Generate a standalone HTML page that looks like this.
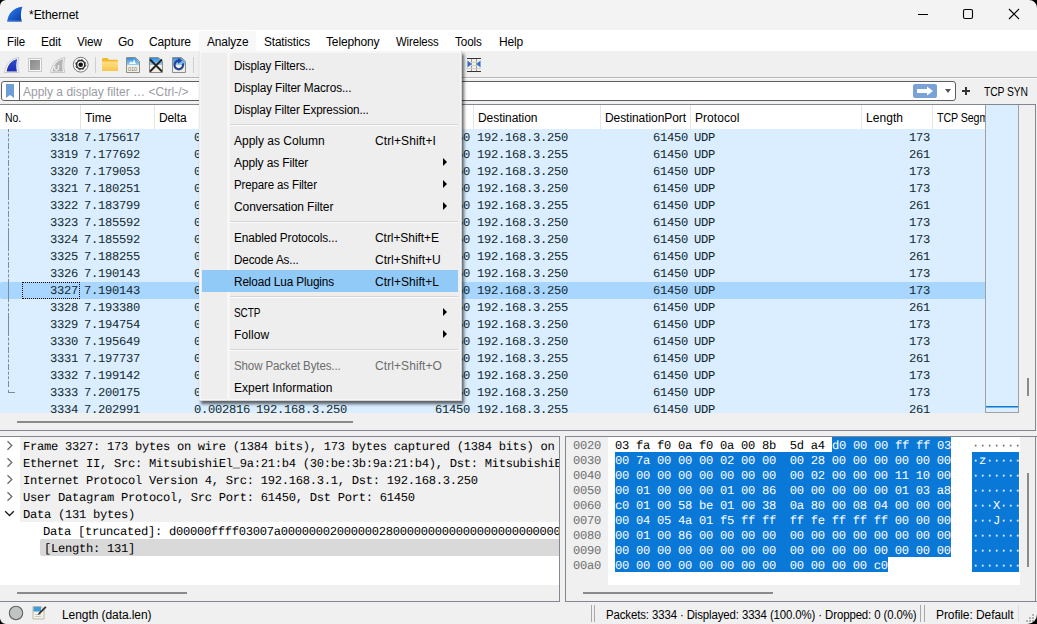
<!DOCTYPE html><html><head><meta charset="utf-8"><title>Ethernet</title><style>
*{box-sizing:border-box;margin:0;padding:0}
html,body{width:1037px;height:624px;overflow:hidden;background:#f0f0f0}
body{position:relative;font-family:"Liberation Sans",sans-serif;font-size:12px;color:#000}
.a{position:absolute}
.t{position:absolute;white-space:pre;line-height:14px;height:14px;font-size:12px}
.m{position:absolute;white-space:pre;font-family:"Liberation Mono",monospace;font-size:12.15px;letter-spacing:-0.291px;line-height:14px;height:14px;color:#12272e;text-rendering:geometricPrecision}
.mr{text-align:right}
.row{position:absolute;left:0;width:985px;height:17px}
.sel{background:#a9d6ff;border-radius:2px 0 0 2px}
.mi{position:absolute;left:202px;width:256px;height:22px}
.sep{position:absolute;left:230px;width:228px;height:1px;background:#d7d7d7}
.arr{position:absolute;left:443px;width:0;height:0;border-left:4px solid #000;border-top:4px solid transparent;border-bottom:4px solid transparent}
.hx{color:#000}
.hs{color:#fff}
</style></head><body>
<div class="a" style="left:0px;top:0px;width:1037px;height:30px;background:#f3f3f3;"></div>
<div class="t" style="left:29px;top:8px;letter-spacing:-0.041px;">*Ethernet</div>
<svg class="a" style="left:0;top:0" width="30" height="30" viewBox="0 0 30 30"><defs><linearGradient id="fg" x1="0" y1="0" x2="1" y2="1"><stop offset="0" stop-color="#2f86f0"/><stop offset="1" stop-color="#0636a6"/></linearGradient></defs><path d="M7.200 21.800C8 13.500 13.500 7.800 22.400 6.800C20.800 11 20.300 16.500 21.800 21.800Z" fill="url(#fg)"/><path d="M7.400 21.200h14.300" stroke="#6f9ae0" stroke-width="1.200" opacity=".8"/></svg>
<svg class="a" style="left:900px;top:0" width="137" height="30" viewBox="0 0 137 30"><path d="M18 14.5h10" stroke="#000" stroke-width="1" fill="none"/><rect x="63.5" y="9.5" width="9" height="9" rx="1.5" fill="none" stroke="#000" stroke-width="1.100"/><path d="M109 9l10 10M119 9l-10 10" stroke="#000" stroke-width="1.150" fill="none"/></svg>
<div class="a" style="left:0px;top:30px;width:1037px;height:21px;background:#fff;"></div>
<div class="a" style="left:0px;top:51px;width:1037px;height:1px;background:#f0f0f0;"></div>
<div class="a" style="left:199px;top:31px;width:57px;height:20px;background:#f8f8f8;border-radius:3px 3px 0 0"></div>
<div class="t" style="left:7px;top:35px;letter-spacing:-0.12px;transform:scaleX(0.9565);transform-origin:0 0;">File</div>
<div class="t" style="left:41px;top:35px;letter-spacing:-0.12px;transform:scaleX(0.9868);transform-origin:0 0;">Edit</div>
<div class="t" style="left:77px;top:35px;letter-spacing:-0.12px;transform:scaleX(0.9812);transform-origin:0 0;">View</div>
<div class="t" style="left:118px;top:35px;letter-spacing:-0.210px;">Go</div>
<div class="t" style="left:149px;top:35px;letter-spacing:-0.124px;">Capture</div>
<div class="t" style="left:207px;top:35px;letter-spacing:-0.12px;transform:scaleX(0.9899);transform-origin:0 0;">Analyze</div>
<div class="t" style="left:264px;top:35px;letter-spacing:-0.12px;transform:scaleX(0.9813);transform-origin:0 0;">Statistics</div>
<div class="t" style="left:326px;top:35px;letter-spacing:-0.143px;">Telephony</div>
<div class="t" style="left:396px;top:35px;letter-spacing:-0.12px;transform:scaleX(0.9465);transform-origin:0 0;">Wireless</div>
<div class="t" style="left:455px;top:35px;letter-spacing:-0.12px;transform:scaleX(0.9754);transform-origin:0 0;">Tools</div>
<div class="t" style="left:499px;top:35px;letter-spacing:-0.139px;">Help</div>
<div class="a" style="left:0px;top:52px;width:1037px;height:25px;background:#f0f0f0;"></div>
<div class="a" style="left:0px;top:77px;width:1037px;height:1px;background:#b4b4b4;"></div>
<div class="a" style="left:0px;top:78px;width:1037px;height:1px;background:#fbfbfb;"></div>
<svg class="a" style="left:0;top:52px" width="500" height="26" viewBox="0 0 500 26"><defs><linearGradient id="ib" x1="0" y1="0" x2="0" y2="1"><stop offset="0" stop-color="#2f4fd0"/><stop offset="1" stop-color="#1c2fb0"/></linearGradient><linearGradient id="ig" x1="0" y1="0" x2="1" y2="1"><stop offset="0" stop-color="#8a8a8a"/><stop offset="1" stop-color="#a8a8a8"/></linearGradient><linearGradient id="fo" x1="0" y1="0" x2="0" y2="1"><stop offset="0" stop-color="#ffe08a"/><stop offset="1" stop-color="#f7c64a"/></linearGradient><linearGradient id="sk" x1="0" y1="0" x2="0" y2="1"><stop offset="0" stop-color="#2f8fe0"/><stop offset="1" stop-color="#9ccdf2"/></linearGradient></defs><path d="M4.500 20.500C5.500 12.500 10.500 6.500 19 5.500C17.500 10 17.300 15 18.800 20.500Z" fill="#fdfdfd" stroke="#c9c9c9" stroke-width="1"/><path d="M6.600 19.500C7.500 13 11.500 8.300 17.300 7C16 11 16 15.500 17 19.500Z" fill="url(#ib)"/><rect x="28.500" y="6.500" width="13" height="13" fill="#f8f8f8" stroke="#c8c8c8"/><rect x="30" y="8" width="10" height="10" fill="url(#ig)"/><path d="M50.500 20.500C51.500 12.500 56.500 6.500 65 5.500C63.500 10 63.300 15 64.800 20.500Z" fill="#f4f4f4" stroke="#c9c9c9" stroke-width="1"/><path d="M52.600 19.500C53.500 13 57.500 8.300 63.300 7C62 11 62 15.500 63 19.500Z" fill="#b4b4b4"/><path d="M58.500 13v3a2 2 0 1 1-3-1.700" fill="none" stroke="#ececec" stroke-width="1.400"/><circle cx="80.700" cy="12.700" r="7.400" fill="#fdfdfd" stroke="#555" stroke-width="0.800"/><circle cx="80.700" cy="12.700" r="4.100" fill="none" stroke="#2c2c2c" stroke-width="1.500"/><circle cx="80.700" cy="12.700" r="5.100" fill="none" stroke="#2c2c2c" stroke-width="0.900" stroke-dasharray="2.003 2.003"/><circle cx="80.700" cy="12.700" r="2.300" fill="#111"/><rect x="95" y="5" width="1" height="16" fill="#cfcfcf"/><path d="M102 7.500c0-1 .500-1.500 1.500-1.500h4l1.500 1.700h7.500c1 0 1.500.500 1.500 1.500v8.300c0 1-.500 1.500-1.500 1.500h-13c-1 0-1.500-.500-1.500-1.500z" fill="#f4b92b"/><path d="M102 9.500h16v8c0 1-.500 1.500-1.500 1.500h-13c-1 0-1.500-.500-1.500-1.500z" fill="url(#fo)"/><path d="M126.500 5.500h9l4 4v11h-13z" fill="#f1efe2" stroke="#8e8e86"/><path d="M127 6h8.300l3.700 3.700v3.300h-12z" fill="url(#sk)"/><path d="M129 12l2-3 1.500 2 1.500-4 2 5z" fill="#fff" opacity=".9"/><text x="128" y="18.500" font-family="Liberation Sans" font-size="5.500" fill="#777">010</text><path d="M149.500 5.500h9l4 4v11h-13z" fill="#f1efe2" stroke="#8e8e86"/><path d="M150 6h8.300l3.700 3.700v3.300h-12z" fill="url(#sk)"/><path d="M150 7.500l12 12M162 7.500l-12 12" stroke="#222" stroke-width="1.900"/><path d="M172.500 5.500h9l4 4v11h-13z" fill="#f1efe2" stroke="#8e8e86"/><path d="M173 6h8.300l3.700 3.700v3.300h-12z" fill="url(#sk)"/><path d="M182.800 11.500a4.300 4.300 0 1 1-3.800-2.800" fill="none" stroke="#24409a" stroke-width="2.200"/><path d="M178 5.800l4 3-4 3z" fill="#24409a"/><rect x="193" y="5" width="1" height="16" fill="#cfcfcf"/><path d="M467 6.500h14M467 19.500h14" stroke="#333" stroke-width="1.200"/><path d="M471.500 7v12M476.500 7v12" stroke="#9a9a90" stroke-width="1"/><path d="M467 10.500h14M467 13.500h14M467 16.500h14" stroke="#d2d2c8" stroke-width="1"/><path d="M467.500 8.500l4 3.500-4 3.500z" fill="#2f6fc0"/><path d="M480.500 8.500l-4 3.500 4 3.500z" fill="#2f6fc0"/></svg>
<div class="a" style="left:1px;top:81px;width:955px;height:20px;background:#fff;border:1px solid #5f5f5f;border-radius:3px"></div>
<div class="a" style="left:19px;top:82px;width:1px;height:18px;background:#5f5f5f;"></div>
<svg class="a" style="left:5px;top:84px" width="10" height="14" viewBox="0 0 10 14"><path d="M1 0h8v14l-4-3-4 3z" fill="#6d9fd6"/></svg>
<div class="t" style="left:23px;top:85px;letter-spacing:0.003px;color:#9b9ba3">Apply a display filter … &lt;Ctrl-/&gt;</div>
<div class="a" style="left:913px;top:84px;width:24px;height:14px;background:#78a2d8;border-radius:2px"></div>
<svg class="a" style="left:913px;top:84px" width="24" height="14" viewBox="0 0 24 14"><path d="M4 5h10V2.5l6 4.5-6 4.500V9H4z" fill="#fff"/></svg>
<div class="a" style="left:945px;top:89px;width:0;height:0;border-top:4px solid #555;border-left:3.5px solid transparent;border-right:3.5px solid transparent"></div>
<div class="a" style="left:962px;top:90px;width:8px;height:2px;background:#333;"></div>
<div class="a" style="left:965px;top:87px;width:2px;height:8px;background:#333;"></div>
<div class="t" style="left:984px;top:85px;letter-spacing:-0.12px;transform:scaleX(0.8625);transform-origin:0 0;">TCP SYN</div>
<div class="a" style="left:0px;top:104px;width:1036px;height:1px;background:#828790;"></div>
<div class="a" style="left:1035px;top:104px;width:1px;height:327px;background:#828790;"></div>
<div class="a" style="left:0px;top:105px;width:1019px;height:308px;background:#daeeff;"></div>
<div class="a" style="left:0px;top:105px;width:985px;height:24px;background:#fff;"></div>
<div class="t" style="left:5px;top:111px;letter-spacing:-0.12px;transform:scaleX(0.8702);transform-origin:0 0;">No.</div>
<div class="a" style="left:80px;top:105px;width:1px;height:24px;background:#e5e5e5;"></div>
<div class="t" style="left:85px;top:111px;letter-spacing:0.076px;">Time</div>
<div class="a" style="left:154px;top:105px;width:1px;height:24px;background:#e5e5e5;"></div>
<div class="t" style="left:159px;top:111px;letter-spacing:-0.115px;">Delta</div>
<div class="a" style="left:250px;top:105px;width:1px;height:24px;background:#e5e5e5;"></div>
<div class="t" style="left:255px;top:111px;letter-spacing:-0.12px;transform:scaleX(0.9633);transform-origin:0 0;">Source</div>
<div class="a" style="left:380px;top:105px;width:1px;height:24px;background:#e5e5e5;"></div>
<div class="t" style="left:385px;top:111px;letter-spacing:-0.12px;transform:scaleX(0.9679);transform-origin:0 0;">SourcePort</div>
<div class="a" style="left:473px;top:105px;width:1px;height:24px;background:#e5e5e5;"></div>
<div class="t" style="left:478px;top:111px;letter-spacing:-0.052px;">Destination</div>
<div class="a" style="left:600px;top:105px;width:1px;height:24px;background:#e5e5e5;"></div>
<div class="t" style="left:605px;top:111px;letter-spacing:-0.072px;">DestinationPort</div>
<div class="a" style="left:690px;top:105px;width:1px;height:24px;background:#e5e5e5;"></div>
<div class="t" style="left:695px;top:111px;letter-spacing:0.062px;">Protocol</div>
<div class="a" style="left:861px;top:105px;width:1px;height:24px;background:#e5e5e5;"></div>
<div class="t" style="left:866px;top:111px;letter-spacing:0.054px;">Length</div>
<div class="a" style="left:932px;top:105px;width:1px;height:24px;background:#e5e5e5;"></div>
<div class="a" style="left:932px;top:105px;width:53px;height:24px;overflow:hidden"><div class="t" style="left:5px;top:6px;letter-spacing:-0.12px;transform:scaleX(0.89);transform-origin:0 0">TCP Segment Len</div></div>
<div class="a" style="left:985px;top:105px;width:1px;height:308px;background:#a0a0a0;"></div>
<div class="a" style="left:1018px;top:105px;width:1px;height:308px;background:#a0a0a0;"></div>
<div class="a" style="left:985px;top:412px;width:34px;height:1px;background:#a0a0a0;"></div>
<div class="a" style="left:986px;top:406px;width:32px;height:1px;background:#0f7ad8;"></div>
<div class="a" style="left:986px;top:407px;width:32px;height:1px;background:#6fb1ea;"></div>
<div class="a" style="left:1019px;top:105px;width:16px;height:308px;background:#f0f0f0;"></div>
<div class="a" style="left:1027px;top:378px;width:2px;height:18px;background:#8a8a8a;"></div>
<div class="a" style="left:8px;top:129px;width:0;height:17px;border-left:1px dashed #7f8c96"></div>
<div class="m mr" style="left:-22px;width:100px;top:131px;">3318</div>
<div class="m" style="left:84px;top:131px;">7.175617</div>
<div class="m" style="left:194px;top:131px;">0.001830</div>
<div class="m" style="left:256px;top:131px;">192.168.3.250</div>
<div class="m mr" style="left:370px;width:100px;top:131px;">61450</div>
<div class="m" style="left:477px;top:131px;">192.168.3.250</div>
<div class="m mr" style="left:588px;width:100px;top:131px;">61450</div>
<div class="m" style="left:694px;top:131px;">UDP</div>
<div class="m mr" style="left:830px;width:100px;top:131px;">173</div>
<div class="a" style="left:8px;top:146px;width:0;height:17px;border-left:1px dashed #7f8c96"></div>
<div class="m mr" style="left:-22px;width:100px;top:148px;">3319</div>
<div class="m" style="left:84px;top:148px;">7.177692</div>
<div class="m" style="left:194px;top:148px;">0.002075</div>
<div class="m" style="left:256px;top:148px;">192.168.3.250</div>
<div class="m mr" style="left:370px;width:100px;top:148px;">61450</div>
<div class="m" style="left:477px;top:148px;">192.168.3.255</div>
<div class="m mr" style="left:588px;width:100px;top:148px;">61450</div>
<div class="m" style="left:694px;top:148px;">UDP</div>
<div class="m mr" style="left:830px;width:100px;top:148px;">261</div>
<div class="a" style="left:8px;top:163px;width:0;height:17px;border-left:1px dashed #7f8c96"></div>
<div class="m mr" style="left:-22px;width:100px;top:165px;">3320</div>
<div class="m" style="left:84px;top:165px;">7.179053</div>
<div class="m" style="left:194px;top:165px;">0.001361</div>
<div class="m" style="left:256px;top:165px;">192.168.3.250</div>
<div class="m mr" style="left:370px;width:100px;top:165px;">61450</div>
<div class="m" style="left:477px;top:165px;">192.168.3.250</div>
<div class="m mr" style="left:588px;width:100px;top:165px;">61450</div>
<div class="m" style="left:694px;top:165px;">UDP</div>
<div class="m mr" style="left:830px;width:100px;top:165px;">173</div>
<div class="a" style="left:8px;top:180px;width:1px;height:17px;background:#7f8c96;"></div>
<div class="m mr" style="left:-22px;width:100px;top:182px;">3321</div>
<div class="m" style="left:84px;top:182px;">7.180251</div>
<div class="m" style="left:194px;top:182px;">0.001198</div>
<div class="m" style="left:256px;top:182px;">192.168.3.250</div>
<div class="m mr" style="left:370px;width:100px;top:182px;">61450</div>
<div class="m" style="left:477px;top:182px;">192.168.3.250</div>
<div class="m mr" style="left:588px;width:100px;top:182px;">61450</div>
<div class="m" style="left:694px;top:182px;">UDP</div>
<div class="m mr" style="left:830px;width:100px;top:182px;">173</div>
<div class="a" style="left:8px;top:197px;width:0;height:17px;border-left:1px dashed #7f8c96"></div>
<div class="m mr" style="left:-22px;width:100px;top:199px;">3322</div>
<div class="m" style="left:84px;top:199px;">7.183799</div>
<div class="m" style="left:194px;top:199px;">0.003548</div>
<div class="m" style="left:256px;top:199px;">192.168.3.250</div>
<div class="m mr" style="left:370px;width:100px;top:199px;">61450</div>
<div class="m" style="left:477px;top:199px;">192.168.3.255</div>
<div class="m mr" style="left:588px;width:100px;top:199px;">61450</div>
<div class="m" style="left:694px;top:199px;">UDP</div>
<div class="m mr" style="left:830px;width:100px;top:199px;">261</div>
<div class="a" style="left:8px;top:214px;width:0;height:17px;border-left:1px dashed #7f8c96"></div>
<div class="m mr" style="left:-22px;width:100px;top:216px;">3323</div>
<div class="m" style="left:84px;top:216px;">7.185592</div>
<div class="m" style="left:194px;top:216px;">0.001793</div>
<div class="m" style="left:256px;top:216px;">192.168.3.250</div>
<div class="m mr" style="left:370px;width:100px;top:216px;">61450</div>
<div class="m" style="left:477px;top:216px;">192.168.3.250</div>
<div class="m mr" style="left:588px;width:100px;top:216px;">61450</div>
<div class="m" style="left:694px;top:216px;">UDP</div>
<div class="m mr" style="left:830px;width:100px;top:216px;">173</div>
<div class="a" style="left:8px;top:231px;width:1px;height:17px;background:#7f8c96;"></div>
<div class="m mr" style="left:-22px;width:100px;top:233px;">3324</div>
<div class="m" style="left:84px;top:233px;">7.185592</div>
<div class="m" style="left:194px;top:233px;">0.000000</div>
<div class="m" style="left:256px;top:233px;">192.168.3.250</div>
<div class="m mr" style="left:370px;width:100px;top:233px;">61450</div>
<div class="m" style="left:477px;top:233px;">192.168.3.250</div>
<div class="m mr" style="left:588px;width:100px;top:233px;">61450</div>
<div class="m" style="left:694px;top:233px;">UDP</div>
<div class="m mr" style="left:830px;width:100px;top:233px;">173</div>
<div class="a" style="left:8px;top:248px;width:0;height:17px;border-left:1px dashed #7f8c96"></div>
<div class="m mr" style="left:-22px;width:100px;top:250px;">3325</div>
<div class="m" style="left:84px;top:250px;">7.188255</div>
<div class="m" style="left:194px;top:250px;">0.002663</div>
<div class="m" style="left:256px;top:250px;">192.168.3.250</div>
<div class="m mr" style="left:370px;width:100px;top:250px;">61450</div>
<div class="m" style="left:477px;top:250px;">192.168.3.255</div>
<div class="m mr" style="left:588px;width:100px;top:250px;">61450</div>
<div class="m" style="left:694px;top:250px;">UDP</div>
<div class="m mr" style="left:830px;width:100px;top:250px;">261</div>
<div class="a" style="left:8px;top:265px;width:0;height:17px;border-left:1px dashed #7f8c96"></div>
<div class="m mr" style="left:-22px;width:100px;top:267px;">3326</div>
<div class="m" style="left:84px;top:267px;">7.190143</div>
<div class="m" style="left:194px;top:267px;">0.001888</div>
<div class="m" style="left:256px;top:267px;">192.168.3.250</div>
<div class="m mr" style="left:370px;width:100px;top:267px;">61450</div>
<div class="m" style="left:477px;top:267px;">192.168.3.250</div>
<div class="m mr" style="left:588px;width:100px;top:267px;">61450</div>
<div class="m" style="left:694px;top:267px;">UDP</div>
<div class="m mr" style="left:830px;width:100px;top:267px;">173</div>
<div class="row sel" style="top:282px"></div>
<div class="a" style="left:22px;top:282px;width:58px;height:17px;border:1px dotted #000"></div>
<div class="a" style="left:8px;top:282px;width:1px;height:17px;background:#7f8c96;"></div>
<div class="m mr" style="left:-22px;width:100px;top:284px;">3327</div>
<div class="m" style="left:84px;top:284px;">7.190143</div>
<div class="m" style="left:194px;top:284px;">0.000000</div>
<div class="m" style="left:256px;top:284px;">192.168.3.250</div>
<div class="m mr" style="left:370px;width:100px;top:284px;">61450</div>
<div class="m" style="left:477px;top:284px;">192.168.3.250</div>
<div class="m mr" style="left:588px;width:100px;top:284px;">61450</div>
<div class="m" style="left:694px;top:284px;">UDP</div>
<div class="m mr" style="left:830px;width:100px;top:284px;">173</div>
<div class="a" style="left:8px;top:299px;width:0;height:17px;border-left:1px dashed #7f8c96"></div>
<div class="m mr" style="left:-22px;width:100px;top:301px;">3328</div>
<div class="m" style="left:84px;top:301px;">7.193380</div>
<div class="m" style="left:194px;top:301px;">0.003237</div>
<div class="m" style="left:256px;top:301px;">192.168.3.250</div>
<div class="m mr" style="left:370px;width:100px;top:301px;">61450</div>
<div class="m" style="left:477px;top:301px;">192.168.3.255</div>
<div class="m mr" style="left:588px;width:100px;top:301px;">61450</div>
<div class="m" style="left:694px;top:301px;">UDP</div>
<div class="m mr" style="left:830px;width:100px;top:301px;">261</div>
<div class="a" style="left:8px;top:316px;width:1px;height:17px;background:#7f8c96;"></div>
<div class="m mr" style="left:-22px;width:100px;top:318px;">3329</div>
<div class="m" style="left:84px;top:318px;">7.194754</div>
<div class="m" style="left:194px;top:318px;">0.001374</div>
<div class="m" style="left:256px;top:318px;">192.168.3.250</div>
<div class="m mr" style="left:370px;width:100px;top:318px;">61450</div>
<div class="m" style="left:477px;top:318px;">192.168.3.250</div>
<div class="m mr" style="left:588px;width:100px;top:318px;">61450</div>
<div class="m" style="left:694px;top:318px;">UDP</div>
<div class="m mr" style="left:830px;width:100px;top:318px;">173</div>
<div class="a" style="left:8px;top:333px;width:0;height:17px;border-left:1px dashed #7f8c96"></div>
<div class="m mr" style="left:-22px;width:100px;top:335px;">3330</div>
<div class="m" style="left:84px;top:335px;">7.195649</div>
<div class="m" style="left:194px;top:335px;">0.000895</div>
<div class="m" style="left:256px;top:335px;">192.168.3.250</div>
<div class="m mr" style="left:370px;width:100px;top:335px;">61450</div>
<div class="m" style="left:477px;top:335px;">192.168.3.250</div>
<div class="m mr" style="left:588px;width:100px;top:335px;">61450</div>
<div class="m" style="left:694px;top:335px;">UDP</div>
<div class="m mr" style="left:830px;width:100px;top:335px;">173</div>
<div class="a" style="left:8px;top:350px;width:0;height:17px;border-left:1px dashed #7f8c96"></div>
<div class="m mr" style="left:-22px;width:100px;top:352px;">3331</div>
<div class="m" style="left:84px;top:352px;">7.197737</div>
<div class="m" style="left:194px;top:352px;">0.002088</div>
<div class="m" style="left:256px;top:352px;">192.168.3.250</div>
<div class="m mr" style="left:370px;width:100px;top:352px;">61450</div>
<div class="m" style="left:477px;top:352px;">192.168.3.255</div>
<div class="m mr" style="left:588px;width:100px;top:352px;">61450</div>
<div class="m" style="left:694px;top:352px;">UDP</div>
<div class="m mr" style="left:830px;width:100px;top:352px;">261</div>
<div class="a" style="left:8px;top:367px;width:0;height:17px;border-left:1px dashed #7f8c96"></div>
<div class="m mr" style="left:-22px;width:100px;top:369px;">3332</div>
<div class="m" style="left:84px;top:369px;">7.199142</div>
<div class="m" style="left:194px;top:369px;">0.001405</div>
<div class="m" style="left:256px;top:369px;">192.168.3.250</div>
<div class="m mr" style="left:370px;width:100px;top:369px;">61450</div>
<div class="m" style="left:477px;top:369px;">192.168.3.250</div>
<div class="m mr" style="left:588px;width:100px;top:369px;">61450</div>
<div class="m" style="left:694px;top:369px;">UDP</div>
<div class="m mr" style="left:830px;width:100px;top:369px;">173</div>
<div class="a" style="left:8px;top:384px;width:0;height:9px;border-left:1px dashed #7f8c96"></div>
<div class="a" style="left:8px;top:392px;width:7px;height:1px;background:#7f8c96;"></div>
<div class="m mr" style="left:-22px;width:100px;top:386px;">3333</div>
<div class="m" style="left:84px;top:386px;">7.200175</div>
<div class="m" style="left:194px;top:386px;">0.001033</div>
<div class="m" style="left:256px;top:386px;">192.168.3.250</div>
<div class="m mr" style="left:370px;width:100px;top:386px;">61450</div>
<div class="m" style="left:477px;top:386px;">192.168.3.250</div>
<div class="m mr" style="left:588px;width:100px;top:386px;">61450</div>
<div class="m" style="left:694px;top:386px;">UDP</div>
<div class="m mr" style="left:830px;width:100px;top:386px;">173</div>
<div class="m mr" style="left:-22px;width:100px;top:403px;">3334</div>
<div class="m" style="left:84px;top:403px;">7.202991</div>
<div class="m" style="left:194px;top:403px;">0.002816</div>
<div class="m" style="left:256px;top:403px;">192.168.3.250</div>
<div class="m mr" style="left:370px;width:100px;top:403px;">61450</div>
<div class="m" style="left:477px;top:403px;">192.168.3.255</div>
<div class="m mr" style="left:588px;width:100px;top:403px;">61450</div>
<div class="m" style="left:694px;top:403px;">UDP</div>
<div class="m mr" style="left:830px;width:100px;top:403px;">261</div>
<div class="a" style="left:0px;top:413px;width:1035px;height:17px;background:#f0f0f0;"></div>
<div class="a" style="left:17px;top:421px;width:336px;height:2px;background:#8a8a8a;"></div>
<div class="a" style="left:0px;top:430px;width:1036px;height:1px;background:#828790;"></div>
<div class="a" style="left:0px;top:436px;width:560px;height:1px;background:#828790;"></div>
<div class="a" style="left:559px;top:436px;width:1px;height:166px;background:#828790;"></div>
<div class="a" style="left:0px;top:601px;width:560px;height:1px;background:#828790;"></div>
<div class="a" style="left:0px;top:437px;width:559px;height:148px;background:#fff;"></div>
<div class="a" style="left:0;top:437px;width:559px;height:148px;overflow:hidden">
<div class="a" style="left:20px;top:0px;width:539px;height:17px;background:#f0f0f0;"></div>
<svg class="a" style="left:5px;top:3px" width="10" height="11" viewBox="0 0 10 11"><path d="M2.5 1.2l4.3 4.3-4.3 4.300" fill="none" stroke="#6b6b6b" stroke-width="1.3"/></svg>
<div class="m" style="left:23px;top:3px;color:#000">Frame 3327: 173 bytes on wire (1384 bits), 173 bytes captured (1384 bits) on interface \Device\NPF_{5C0A7E6D}, id 0</div>
<div class="a" style="left:20px;top:17px;width:539px;height:17px;background:#f0f0f0;"></div>
<svg class="a" style="left:5px;top:20px" width="10" height="11" viewBox="0 0 10 11"><path d="M2.5 1.2l4.3 4.3-4.3 4.300" fill="none" stroke="#6b6b6b" stroke-width="1.3"/></svg>
<div class="m" style="left:23px;top:20px;color:#000">Ethernet II, Src: MitsubishiEl_9a:21:b4 (30:be:3b:9a:21:b4), Dst: MitsubishiEl_9a:21:c0 (30:be:3b:9a:21:c0)</div>
<div class="a" style="left:20px;top:34px;width:539px;height:17px;background:#f0f0f0;"></div>
<svg class="a" style="left:5px;top:37px" width="10" height="11" viewBox="0 0 10 11"><path d="M2.5 1.2l4.3 4.3-4.3 4.300" fill="none" stroke="#6b6b6b" stroke-width="1.3"/></svg>
<div class="m" style="left:23px;top:37px;color:#000">Internet Protocol Version 4, Src: 192.168.3.1, Dst: 192.168.3.250</div>
<div class="a" style="left:20px;top:51px;width:539px;height:17px;background:#f0f0f0;"></div>
<svg class="a" style="left:5px;top:54px" width="10" height="11" viewBox="0 0 10 11"><path d="M2.5 1.2l4.3 4.3-4.3 4.300" fill="none" stroke="#6b6b6b" stroke-width="1.3"/></svg>
<div class="m" style="left:23px;top:54px;color:#000">User Datagram Protocol, Src Port: 61450, Dst Port: 61450</div>
<div class="a" style="left:20px;top:68px;width:539px;height:17px;background:#f0f0f0;"></div>
<svg class="a" style="left:4px;top:71px" width="11" height="11" viewBox="0 0 11 11"><path d="M1.200 3.2l4.300 4.300 4.300-4.300" fill="none" stroke="#1a1a1a" stroke-width="1.3"/></svg>
<div class="m" style="left:23px;top:71px;color:#000">Data (131 bytes)</div>
<div class="m" style="left:43px;top:88px;color:#000">Data [truncated]: d00000ffff03007a000000020000002800000000000000000000000000000002000000111000000100000001008600000000</div>
<div class="a" style="left:40px;top:102px;width:519px;height:17px;background:#d9d9d9;border-radius:2px 0 0 2px"></div>
<div class="m" style="left:44px;top:105px;color:#000">[Length: 131]</div>
</div>
<div class="a" style="left:0px;top:585px;width:559px;height:16px;background:#f0f0f0;"></div>
<div class="a" style="left:17px;top:592px;width:170px;height:2px;background:#8a8a8a;"></div>
<div class="a" style="left:565px;top:436px;width:472px;height:1px;background:#828790;"></div>
<div class="a" style="left:565px;top:436px;width:1px;height:166px;background:#828790;"></div>
<div class="a" style="left:565px;top:601px;width:472px;height:1px;background:#828790;"></div>
<div class="a" style="left:1035px;top:436px;width:1px;height:166px;background:#828790;"></div>
<div class="a" style="left:566px;top:437px;width:454px;height:148px;background:#fff;"></div>
<div class="a" style="left:566px;top:437px;width:42px;height:148px;background:#f0f0f0;"></div>
<div class="a" style="left:1020px;top:437px;width:15px;height:164px;background:#f0f0f0;"></div>
<div class="a" style="left:1027px;top:473px;width:2px;height:94px;background:#8a8a8a;"></div>
<div class="a" style="left:566px;top:585px;width:454px;height:16px;background:#f0f0f0;"></div>
<div class="a" style="left:583px;top:592px;width:190px;height:2px;background:#8a8a8a;"></div>
<div class="a" style="left:832px;top:437px;width:119px;height:15px;background:#0a78d7;"></div>
<div class="a" style="left:615px;top:452px;width:336px;height:105px;background:#0a78d7;"></div>
<div class="a" style="left:615px;top:557px;width:273px;height:15px;background:#0a78d7;"></div>
<div class="a" style="left:972px;top:452px;width:47px;height:120px;background:#0a78d7;"></div>
<div class="a" style="left:566px;top:437px;width:453px;height:148px;overflow:hidden">
<div class="m" style="left:7px;top:2px;color:#6e6e6e">0020</div>
<div class="m" style="left:49px;top:2px;color:#000">03 fa f0 0a f0 0a 00 8b  5d a4 </div>
<div class="m" style="left:266px;top:2px;color:#fff">d0 00 00 ff ff 03</div>
<div class="m" style="left:406px;top:2px;color:#5f5f5f">········</div>
<div class="m" style="left:7px;top:17px;color:#6e6e6e">0030</div>
<div class="m" style="left:49px;top:17px;color:#fff">00 7a 00 00 00 02 00 00  00 28 00 00 00 00 00 00</div>
<div class="m" style="left:406px;top:17px;color:#fff">·z······</div>
<div class="m" style="left:7px;top:32px;color:#6e6e6e">0040</div>
<div class="m" style="left:49px;top:32px;color:#fff">00 00 00 00 00 00 00 00  00 02 00 00 00 11 10 00</div>
<div class="m" style="left:406px;top:32px;color:#fff">········</div>
<div class="m" style="left:7px;top:47px;color:#6e6e6e">0050</div>
<div class="m" style="left:49px;top:47px;color:#fff">00 01 00 00 00 01 00 86  00 00 00 00 00 01 03 a8</div>
<div class="m" style="left:406px;top:47px;color:#fff">········</div>
<div class="m" style="left:7px;top:62px;color:#6e6e6e">0060</div>
<div class="m" style="left:49px;top:62px;color:#fff">c0 01 00 58 be 01 00 38  0a 80 00 08 04 00 00 00</div>
<div class="m" style="left:406px;top:62px;color:#fff">···X···8</div>
<div class="m" style="left:7px;top:77px;color:#6e6e6e">0070</div>
<div class="m" style="left:49px;top:77px;color:#fff">00 04 05 4a 01 f5 ff ff  ff fe ff ff ff 00 00 00</div>
<div class="m" style="left:406px;top:77px;color:#fff">···J····</div>
<div class="m" style="left:7px;top:92px;color:#6e6e6e">0080</div>
<div class="m" style="left:49px;top:92px;color:#fff">00 01 00 86 00 00 00 00  00 00 00 00 00 00 00 00</div>
<div class="m" style="left:406px;top:92px;color:#fff">········</div>
<div class="m" style="left:7px;top:107px;color:#6e6e6e">0090</div>
<div class="m" style="left:49px;top:107px;color:#fff">00 00 00 00 00 00 00 00  00 00 00 00 00 00 00 00</div>
<div class="m" style="left:406px;top:107px;color:#fff">········</div>
<div class="m" style="left:7px;top:122px;color:#6e6e6e">00a0</div>
<div class="m" style="left:49px;top:122px;color:#fff">00 00 00 00 00 00 00 00  00 00 00 00 c0</div>
<div class="m" style="left:406px;top:122px;color:#fff">········</div>
</div>
<div class="a" style="left:199px;top:51px;width:263px;height:350px;background:#eeeeee;border:2px solid #f6f6f6;box-shadow:2px 3px 3px rgba(0,0,0,0.6)"></div>
<div class="a" style="left:199px;top:51px;width:1px;height:350px;background:#ececec;"></div>
<div class="a" style="left:461px;top:51px;width:1px;height:350px;background:#d6d6d6;"></div>
<div class="a" style="left:199px;top:400px;width:263px;height:1px;background:#d6d6d6;"></div>
<div class="a" style="left:227px;top:53px;width:3px;height:346px;background:#f6f6f6;"></div>
<div class="t" style="left:234px;top:59px;letter-spacing:-0.12px;transform:scaleX(0.9669);transform-origin:0 0;">Display Filters...</div>
<div class="t" style="left:234px;top:81px;letter-spacing:-0.12px;transform:scaleX(0.9856);transform-origin:0 0;">Display Filter Macros...</div>
<div class="t" style="left:234px;top:103px;letter-spacing:-0.12px;transform:scaleX(0.9716);transform-origin:0 0;">Display Filter Expression...</div>
<div class="a" style="left:230px;top:124px;width:228px;height:1px;background:#d4d4d4;"></div>
<div class="a" style="left:230px;top:125px;width:228px;height:1px;background:#fbfbfb;"></div>
<div class="t" style="left:234px;top:134px;letter-spacing:-0.001px;">Apply as Column</div>
<div class="t" style="left:375px;top:134px;letter-spacing:0.084px;">Ctrl+Shift+I</div>
<div class="t" style="left:234px;top:156px;letter-spacing:-0.119px;">Apply as Filter</div>
<div class="arr" style="top:158px"></div>
<div class="t" style="left:234px;top:178px;letter-spacing:-0.12px;transform:scaleX(0.9559);transform-origin:0 0;">Prepare as Filter</div>
<div class="arr" style="top:180px"></div>
<div class="t" style="left:234px;top:200px;letter-spacing:-0.071px;">Conversation Filter</div>
<div class="arr" style="top:202px"></div>
<div class="a" style="left:230px;top:221px;width:228px;height:1px;background:#d4d4d4;"></div>
<div class="a" style="left:230px;top:222px;width:228px;height:1px;background:#fbfbfb;"></div>
<div class="t" style="left:234px;top:231px;letter-spacing:-0.12px;transform:scaleX(0.9870);transform-origin:0 0;">Enabled Protocols...</div>
<div class="t" style="left:375px;top:231px;letter-spacing:-0.061px;">Ctrl+Shift+E</div>
<div class="t" style="left:234px;top:253px;letter-spacing:-0.12px;transform:scaleX(0.9705);transform-origin:0 0;">Decode As...</div>
<div class="t" style="left:375px;top:253px;letter-spacing:0.038px;">Ctrl+Shift+U</div>
<div class="a" style="left:202px;top:270px;width:256px;height:22px;background:#91c9f7;"></div>
<div class="t" style="left:234px;top:275px;letter-spacing:-0.12px;transform:scaleX(0.9816);transform-origin:0 0;">Reload Lua Plugins</div>
<div class="t" style="left:375px;top:275px;letter-spacing:0.054px;">Ctrl+Shift+L</div>
<div class="a" style="left:230px;top:296px;width:228px;height:1px;background:#d4d4d4;"></div>
<div class="a" style="left:230px;top:297px;width:228px;height:1px;background:#fbfbfb;"></div>
<div class="t" style="left:234px;top:306px;letter-spacing:-0.12px;transform:scaleX(0.8356);transform-origin:0 0;">SCTP</div>
<div class="arr" style="top:308px"></div>
<div class="t" style="left:234px;top:328px;letter-spacing:0.075px;">Follow</div>
<div class="arr" style="top:330px"></div>
<div class="a" style="left:230px;top:349px;width:228px;height:1px;background:#d4d4d4;"></div>
<div class="a" style="left:230px;top:350px;width:228px;height:1px;background:#fbfbfb;"></div>
<div class="t" style="left:234px;top:359px;letter-spacing:-0.12px;transform:scaleX(0.9608);transform-origin:0 0;color:#6d6d6d">Show Packet Bytes...</div>
<div class="t" style="left:375px;top:359px;letter-spacing:0.084px;color:#6d6d6d">Ctrl+Shift+O</div>
<div class="t" style="left:234px;top:381px;letter-spacing:0.026px;">Expert Information</div>
<div class="a" style="left:0px;top:602px;width:1037px;height:22px;background:#f0f0f0;"></div>
<svg class="a" style="left:8px;top:605px" width="16" height="16" viewBox="0 0 16 16"><circle cx="8" cy="8" r="6.700" fill="#c0c4c0" stroke="#5e6464" stroke-width="1.100"/></svg>
<svg class="a" style="left:32px;top:605px" width="15" height="15" viewBox="0 0 15 15"><path d="M1 1.500h8l3 3v9.500h-11z" fill="#f4f2e6" stroke="#b9b7ab" stroke-width="1"/><path d="M1.500 2h7.500v4.500h-7.500z" fill="#3f9bdc"/><path d="M3 9.500h6M3 11.500h6" stroke="#c9c9c9" stroke-width="1"/><path d="M13.200 1.200l1.300 1.300-6.500 6.500-2.200 0.900 0.900-2.200z" fill="#333"/></svg>
<div class="t" style="left:62px;top:608px;letter-spacing:-0.075px;">Length (data.len)</div>
<div class="a" style="left:591px;top:605px;width:1px;height:17px;background:#a8a8a8;"></div>
<div class="a" style="left:594px;top:605px;width:1px;height:17px;background:#a8a8a8;"></div>
<div class="t" style="left:606px;top:608px;letter-spacing:-0.12px;transform:scaleX(0.9514);transform-origin:0 0;">Packets: 3334 · Displayed: 3334 (100.0%) · Dropped: 0 (0.0%)</div>
<div class="a" style="left:920px;top:605px;width:1px;height:17px;background:#a8a8a8;"></div>
<div class="a" style="left:924px;top:605px;width:1px;height:17px;background:#a8a8a8;"></div>
<div class="t" style="left:936px;top:608px;letter-spacing:-0.078px;">Profile: Default</div>
<div class="a" style="left:1018px;top:605px;width:1px;height:17px;background:#dcdcdc;"></div>
<svg class="a" style="left:1024px;top:612px" width="12" height="12" viewBox="0 0 12 12"><g fill="#b4b4b4"><rect x="8" y="2" width="2" height="2"/><rect x="5" y="5" width="2" height="2"/><rect x="8" y="5" width="2" height="2"/><rect x="2" y="8" width="2" height="2"/><rect x="5" y="8" width="2" height="2"/><rect x="8" y="8" width="2" height="2"/></g></svg>
<svg class="a" style="left:0;top:0" width="1037" height="624" viewBox="0 0 1037 624"><path d="M0 0h6a6 6 0 0 0-6 6z" fill="#000"/><path d="M1037 0v8a8 8 0 0 0-8-8z" fill="#000"/><path d="M1037 624h-9.500a9.500 9.500 0 0 0 9.500-9.500z" fill="#000"/><path d="M0 624v-6a6 6 0 0 0 6 6z" fill="#000"/></svg>
</body></html>
